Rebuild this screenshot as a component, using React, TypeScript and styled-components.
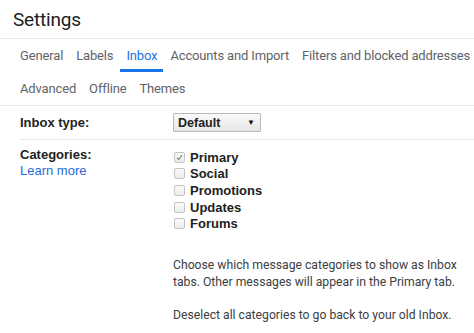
import React from "react";
import styled, { createGlobalStyle } from "styled-components";

const GlobalStyle = createGlobalStyle`
  html, body {
    margin: 0;
    padding: 0;
    background: #ffffff;
  }
  body {
    font-family: Roboto, "Liberation Sans", Arial, sans-serif;
    color: #202124;
  }
`;

const Page = styled.div`
  width: 474px;
  height: 333px;
  overflow: hidden;
`;

const Header = styled.div`
  height: 39px;
  padding-left: 13px;
  display: flex;
  align-items: center;
  border-bottom: 1px solid #eaebed;
  box-sizing: border-box;
`;

const Title = styled.h1`
  margin: 0;
  font-family: Roboto, sans-serif;
  font-weight: 400;
  font-size: 19px;
  letter-spacing: -0.2px;
  color: #202124;
`;

const Tabs = styled.nav`
  display: flex;
  flex-wrap: wrap;
  padding-left: 14px;
  border-bottom: 1px solid #eaebed;
`;

const TabRow = styled.div`
  display: flex;
  width: 100%;
  gap: 1px;
`;

const Tab = styled.div<{ $active?: boolean }>`
  height: 33px;
  padding: 0 6px;
  display: flex;
  align-items: center;
  box-sizing: border-box;
  font-size: 13px;
  letter-spacing: -0.15px;
  white-space: nowrap;
  color: ${({ $active }) => ($active ? "#1a73e8" : "#5f6368")};
  border-bottom: 3px solid
    ${({ $active }) => ($active ? "#1a73e8" : "transparent")};
  border-top: 3px solid transparent;
`;

const Section = styled.div<{ $divider?: boolean }>`
  display: grid;
  grid-template-columns: 153px 1fr;
  margin-left: 20px;
  padding: 7px 0;
  border-bottom: ${({ $divider }) => ($divider ? "1px solid #e6e6e6" : "none")};
`;

const Label = styled.div`
  font-family: "Liberation Sans", Arial, sans-serif;
  font-weight: 700;
  font-size: 13px;
  line-height: 16px;
  color: #222222;
`;

const LabelCell = styled.div<{ $center?: boolean }>`
  display: flex;
  flex-direction: column;
  justify-content: ${({ $center }) => ($center ? "center" : "flex-start")};
`;

const LearnMore = styled.a`
  font-family: "Liberation Sans", Arial, sans-serif;
  font-size: 13px;
  line-height: 16px;
  color: #2a6ad8;
  text-decoration: none;
`;

const Select = styled.div`
  width: 88px;
  height: 19px;
  box-sizing: border-box;
  border: 1px solid #b9b9b9;
  border-radius: 1px;
  background: linear-gradient(#fafafa, #e6e6e6);
  display: flex;
  align-items: center;
  justify-content: space-between;
  padding: 0 5px 0 4px;
  font-family: "Liberation Sans", Arial, sans-serif;
  font-weight: 700;
  font-size: 12.5px;
  color: #222222;
`;

const Arrow = styled.span`
  font-size: 8px;
  color: #111111;
`;

const Options = styled.div`
  display: flex;
  flex-direction: column;
  padding-top: 2px;
`;

const Option = styled.label`
  display: flex;
  align-items: center;
  height: 16.6px;
  font-family: "Liberation Sans", Arial, sans-serif;
  font-weight: 700;
  font-size: 13px;
  color: #222222;
`;

const Box = styled.span`
  width: 11px;
  height: 11px;
  margin: 0 5px 0 1px;
  box-sizing: border-box;
  border: 1px solid #c4c4c4;
  border-radius: 2px;
  background: linear-gradient(#fbfbfb, #ececec);
  display: flex;
  align-items: center;
  justify-content: center;
`;

const Help = styled.div`
  margin-top: 25px;
  font-family: Roboto, sans-serif;
  font-size: 12.2px;
  line-height: 17px;
  color: #3c4043;
  white-space: nowrap;

  p {
    margin: 0 0 16px;
  }
`;

const tabRows = [
  [
    { name: "General" },
    { name: "Labels" },
    { name: "Inbox", active: true },
    { name: "Accounts and Import" },
    { name: "Filters and blocked addresses" },
  ],
  [{ name: "Advanced" }, { name: "Offline" }, { name: "Themes" }],
];

const categories = [
  { name: "Primary", checked: true },
  { name: "Social" },
  { name: "Promotions" },
  { name: "Updates" },
  { name: "Forums" },
];

const Check = () => (
  <svg width="7" height="7" viewBox="0 0 7 7">
    <path d="M1 3.8 L2.8 5.6 L6 1.2" fill="none" stroke="#8a8a8a" strokeWidth="1.3" />
  </svg>
);

export default function App() {
  return (
    <Page>
      <GlobalStyle />
      <Header>
        <Title>Settings</Title>
      </Header>
      <Tabs>
        {tabRows.map((row, i) => (
          <TabRow key={i}>
            {row.map((t) => (
              <Tab key={t.name} $active={t.active}>
                {t.name}
              </Tab>
            ))}
          </TabRow>
        ))}
      </Tabs>
      <Section $divider>
        <LabelCell $center>
          <Label>Inbox type:</Label>
        </LabelCell>
        <Select>
          Default
          <Arrow>▼</Arrow>
        </Select>
      </Section>
      <Section>
        <LabelCell>
          <Label>Categories:</Label>
          <LearnMore href="#">Learn more</LearnMore>
        </LabelCell>
        <div>
          <Options>
            {categories.map((c) => (
              <Option key={c.name}>
                <Box>{c.checked && <Check />}</Box>
                {c.name}
              </Option>
            ))}
          </Options>
          <Help>
            <p>
              Choose which message categories to show as Inbox
              <br />
              tabs. Other messages will appear in the Primary tab.
            </p>
            <p>Deselect all categories to go back to your old Inbox.</p>
          </Help>
        </div>
      </Section>
    </Page>
  );
}
